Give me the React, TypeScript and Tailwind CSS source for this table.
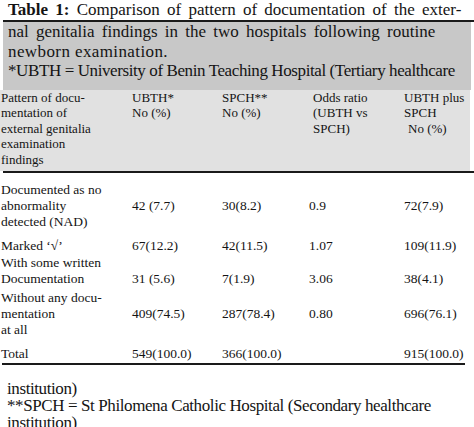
const rows = [
  {
    label: ['Documented as no', 'abnormality', 'detected (NAD)'],
    valueLine: 1,
    values: ['42 (7.7)', '30(8.2)', '0.9', '72(7.9)'],
    pad: 'pt-[9px]',
  },
  {
    label: ['Marked ‘√’'],
    valueLine: 0,
    values: ['67(12.2)', '42(11.5)', '1.07', '109(11.9)'],
    pad: 'pt-[8px]',
  },
  {
    label: ['With some written', 'Documentation'],
    valueLine: 1,
    values: ['31 (5.6)', '7(1.9)', '3.06', '38(4.1)'],
    pad: 'pt-[1px]',
  },
  {
    label: ['Without any docu-', 'mentation', 'at all'],
    valueLine: 1,
    values: ['409(74.5)', '287(78.4)', '0.80', '696(76.1)'],
    pad: 'pt-[3px]',
  },
  {
    label: ['Total'],
    valueLine: 0,
    values: ['549(100.0)', '366(100.0)', '', '915(100.0)'],
    pad: 'pt-[8px]',
  },
];

const cols = 'grid grid-cols-[132px_90px_87px_94px_1fr]';

export default function App() {
  return (
    <div className="w-[474px] h-[427px] overflow-hidden bg-white text-[#141414] font-[family-name:'Liberation_Serif',serif]">
      {/* caption */}
      <div className="pl-[8px] text-[17px] leading-[20px] whitespace-nowrap [word-spacing:3px]">
        <span className="font-bold">Table 1:</span> Comparison of pattern of documentation of the exter-
      </div>
      <div className="ml-[3px] h-[2px] bg-[#1a1a1a]" />
      <div className="ml-[3px] mr-[3px] bg-[#c8c8c8] pl-[5px] pb-[9px] text-[17px] leading-[19.5px] whitespace-nowrap">
        <div className="[word-spacing:3px]">nal genitalia findings in the two hospitals following routine</div>
        <div className="tracking-[0.4px]">newborn examination.</div>
        <div className="tracking-[-0.4px]">*UBTH = University of Benin Teaching Hospital (Tertiary healthcare</div>
      </div>

      {/* table header */}
      <div className={`${cols} w-[470px] bg-[#e1e1e1] pb-[4px] text-[13px] leading-[15.5px]`}>
        <div className="pl-[1px]">
          <div>Pattern of docu-</div>
          <div>mentation of</div>
          <div>external genitalia</div>
          <div>examination</div>
          <div>findings</div>
        </div>
        <div>
          <div>UBTH*</div>
          <div>No (%)</div>
        </div>
        <div>
          <div>SPCH**</div>
          <div>No (%)</div>
        </div>
        <div className="pl-[4px]">
          <div>Odds ratio</div>
          <div>(UBTH vs</div>
          <div>SPCH)</div>
        </div>
        <div className="pl-[1px]">
          <div>UBTH plus</div>
          <div>SPCH</div>
          <div className="pl-[4px]">No (%)</div>
        </div>
      </div>
      <div className="ml-[3px] h-[2px] bg-[#1a1a1a]" />

      {/* body */}
      <div className="w-[470px] text-[13.5px] leading-[16px]">
        {rows.map((row, i) => (
          <div key={i} className={`${cols} ${row.pad}`}>
            <div className="pl-[1px]">
              {row.label.map((l) => (
                <div key={l} className="whitespace-nowrap">{l}</div>
              ))}
            </div>
            {row.values.map((v, j) => (
              <div key={j} className={j === 3 ? 'pl-[1px]' : ''}>
                {Array.from({ length: row.valueLine }).map((_, k) => (
                  <div key={k}>&nbsp;</div>
                ))}
                <div>{v}</div>
              </div>
            ))}
          </div>
        ))}
      </div>
      <div className="ml-[2px] mt-[1px] w-[463px] h-[2px] bg-[#1a1a1a]" />

      {/* footnote */}
      <div className="pl-[7px] pt-[15px] text-[17px] leading-[17px] whitespace-nowrap tracking-[-0.4px]">
        <div>institution)</div>
        <div>**SPCH = St Philomena Catholic Hospital (Secondary healthcare</div>
        <div>institution)</div>
      </div>
    </div>
  );
}
